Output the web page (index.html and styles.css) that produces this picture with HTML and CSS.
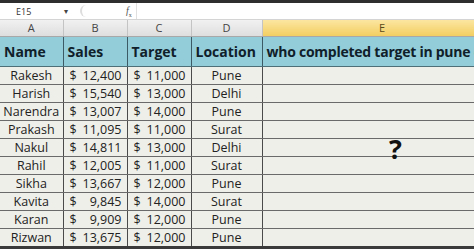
FILE: index.html
```html
<!DOCTYPE html>
<html lang="en">
<head>
    <meta charset="UTF-8">
    <title>Sales sheet</title>
    <link rel="stylesheet" href="styles.css">
</head>
<body>
    <div id="topbar"></div>
    <div id="formula-bar">
        <div class="name-box">E15 <span class="arrow">&#9662;</span></div>
        <div class="bracket"></div>
        <div class="fx"><i>f</i><sub>x</sub></div>
        <div class="formula"></div>
    </div>
    <div class="sheet">
        <table>
            <colgroup>
                <col style="width:63px">
                <col style="width:64px">
                <col style="width:64px">
                <col style="width:71px">
                <col style="width:240px">
            </colgroup>
            <tr class="letters">
                <td>A</td><td>B</td><td>C</td><td>D</td><td class="active">E</td>
            </tr>
            <tr class="heads">
                <td>Name</td><td>Sales</td><td>Target</td><td>Location</td><td class="long">who completed target in pune city</td>
            </tr>
            <tr><td>Rakesh</td><td class="money"><span>$</span><span>12,400</span></td><td class="money"><span>$</span><span>11,000</span></td><td>Pune</td><td></td></tr>
            <tr><td>Harish</td><td class="money"><span>$</span><span>15,540</span></td><td class="money"><span>$</span><span>13,000</span></td><td>Delhi</td><td></td></tr>
            <tr><td>Narendra</td><td class="money"><span>$</span><span>13,007</span></td><td class="money"><span>$</span><span>14,000</span></td><td>Pune</td><td></td></tr>
            <tr><td>Prakash</td><td class="money"><span>$</span><span>11,095</span></td><td class="money"><span>$</span><span>11,000</span></td><td>Surat</td><td></td></tr>
            <tr><td>Nakul</td><td class="money"><span>$</span><span>14,811</span></td><td class="money"><span>$</span><span>13,000</span></td><td>Delhi</td><td></td></tr>
            <tr><td>Rahil</td><td class="money"><span>$</span><span>12,005</span></td><td class="money"><span>$</span><span>11,000</span></td><td>Surat</td><td></td></tr>
            <tr><td>Sikha</td><td class="money"><span>$</span><span>13,667</span></td><td class="money"><span>$</span><span>12,000</span></td><td>Pune</td><td></td></tr>
            <tr><td>Kavita</td><td class="money"><span>$</span><span>9,845</span></td><td class="money"><span>$</span><span>14,000</span></td><td>Surat</td><td></td></tr>
            <tr><td>Karan</td><td class="money"><span>$</span><span>9,909</span></td><td class="money"><span>$</span><span>12,000</span></td><td>Pune</td><td></td></tr>
            <tr><td>Rizwan</td><td class="money"><span>$</span><span>13,675</span></td><td class="money"><span>$</span><span>12,000</span></td><td>Pune</td><td></td></tr>
        </table>
        <div id="question">?</div>
    </div>
</body>
</html>
```

FILE: styles.css
```css
body {
    margin: 0;
    padding: 0;
    width: 474px;
    height: 249px;
    overflow: hidden;
    background-color: #3a3a3a;
    font-family: "Open Sans", "Noto Sans", sans-serif;
    color: #222;
}

#topbar {
    height: 3px;
    background-color: #2e2e2e;
}

#formula-bar {
    display: flex;
    align-items: center;
    height: 16px;
    background-color: #fff;
    border-bottom: 1px solid #d4d4d4;
}

.name-box {
    width: 74px;
    padding-left: 16px;
    font-size: 9px;
    color: #333;
    display: flex;
    justify-content: space-between;
    box-sizing: border-box;
    padding-right: 6px;
}

.arrow {
    font-size: 8px;
    color: #444;
}

.bracket {
    width: 6px;
    height: 12px;
    border-left: 2px solid #ddd;
    border-radius: 6px 0 0 6px;
    margin-left: 6px;
}

.fx {
    margin-left: 38px;
    width: 8px;
    font-family: "Liberation Serif", serif;
    font-size: 10px;
    color: #555;
}

.fx sub {
    font-size: 6px;
}

.formula {
    flex: 1;
    height: 16px;
    border-left: 1px solid #e0e0e0;
    margin-left: 2px;
}

.sheet {
    position: relative;
}

table {
    border-collapse: collapse;
    table-layout: fixed;
    width: 502px;
    background-color: #efefe9;
}

td {
    padding: 0;
    height: 17px;
    text-align: center;
    font-size: 12.5px;
    line-height: 17px;
    border-right: 1px solid #4a4a4a;
    border-bottom: 1px solid #6a6a6a;
    white-space: nowrap;
    overflow: hidden;
}

.letters td {
    height: 16px;
    font-size: 11px;
    line-height: 16px;
    color: #444;
    background: linear-gradient(#f1f1f1, #dedede);
    border-right: 1px solid #c4c4c4;
    border-bottom: 1px solid #a8a8a8;
}

.letters td.active {
    background: linear-gradient(#fbe5a0, #f3cf62);
    color: #5a4a1a;
}

.heads td {
    height: 29px;
    font-weight: bold;
    font-size: 14px;
    text-align: left;
    padding-left: 4px;
    background-color: #93cdd9;
    color: #10202a;
    border-right: 1px solid #3c5a66;
    border-bottom: 1px solid #4e6f78;
}

.heads td.long {
    letter-spacing: -0.25px;
}

.money span {
    display: inline-block;
}

.money {
    text-align: left;
}

.money span:first-child {
    padding-left: 6px;
}

.money span:last-child {
    float: right;
    padding-right: 5px;
}

tr:last-child td {
    border-bottom: 3px solid #3a3a3a;
}

#question {
    position: absolute;
    left: 389px;
    top: 110px;
    font-size: 27px;
    font-weight: bold;
    color: #111;
}
```
